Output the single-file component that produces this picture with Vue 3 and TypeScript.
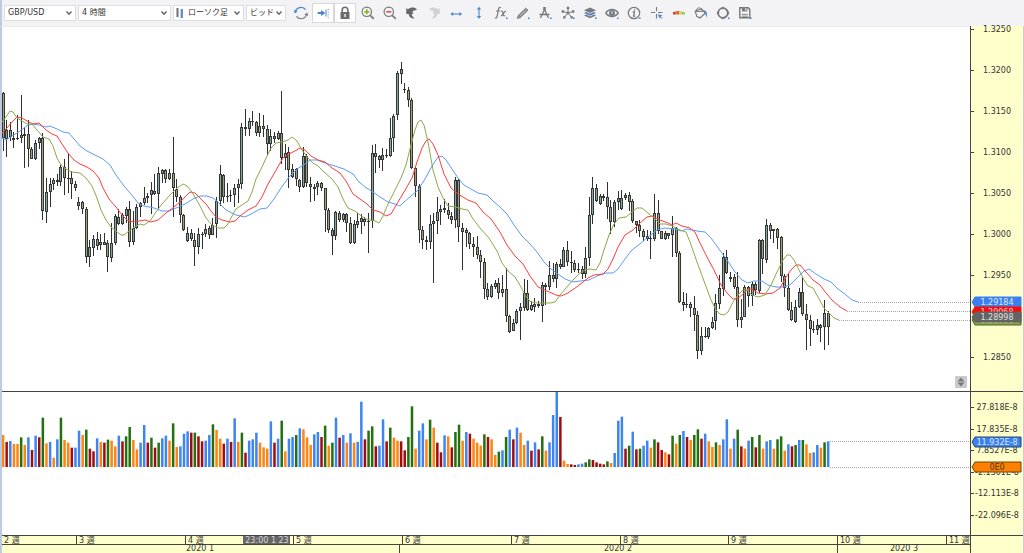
<script setup lang="ts">
interface Shape { d: string; s?: string; f?: string; w?: number }
interface Tool { label: string; shapes: Shape[]; menu?: boolean; on?: boolean; off?: boolean }
interface Candle { x: number; high: number; top: number; bottom: number; low: number; up: boolean }

const G = '#77787b'
const B = '#4a86cf'

const toolGroups: Tool[][] = [
  [
    { label: '更新', shapes: [
      { d: 'M2.3 7.2A5.8 5.8 0 0 1 12.6 4.6', s: B, w: 1.3 }, { d: 'M13.7 8.8A5.8 5.8 0 0 1 3.4 11.4', s: G, w: 1.1 },
      { d: 'M1 5L4.6 6.6L1.6 8.4Z', f: B }, { d: 'M15 11L11.4 9.4L14.4 7.6Z', f: G } ] },
    { label: '自動スクロール', on: true, shapes: [
      { d: 'M2.6 8H7', s: B, w: 2 }, { d: 'M6 5L10.4 8L6 11Z', f: B }, { d: 'M11 4.5V11.5', s: B, w: 1 },
      { d: 'M13.2 4V5M13.2 6.7V7.7M13.2 9.3V10.3M13.2 11.8V12.6', s: G, w: 1 } ] },
    { label: 'ロック', on: true, shapes: [
      { d: 'M3.5 7H12.5V14H3.5Z', f: '#6c6d70' }, { d: 'M5.2 7V5A2.8 2.8 0 0 1 10.8 5V7', s: '#6c6d70', w: 1.6 },
      { d: 'M8 9V12', s: '#fff', w: 1.3 } ] },
  ],
  [
    { label: '拡大', shapes: [
      { d: 'M11.5 6.8A4.7 4.7 0 1 1 2.1 6.8A4.7 4.7 0 1 1 11.5 6.8', s: G, w: 1.2 }, { d: 'M10.3 10.3L13.8 13.8', s: G, w: 1.7 },
      { d: 'M4.3 6.8H9.3M6.8 4.3V9.3', s: '#8db51c', w: 1.7 } ] },
    { label: '縮小', shapes: [
      { d: 'M11.5 6.8A4.7 4.7 0 1 1 2.1 6.8A4.7 4.7 0 1 1 11.5 6.8', s: G, w: 1.2 }, { d: 'M10.3 10.3L13.8 13.8', s: G, w: 1.7 },
      { d: 'M4.3 6.8H9.3', s: '#e05252', w: 1.7 } ] },
    { label: '元に戻す', shapes: [
      { d: 'M2.3 3L4 4.2C6.4 2 10.6 1.8 13 4.4L10.8 5.6C9 5.2 8.4 6.4 8.6 7.6L9.4 9H7.6C7.8 10.6 8.8 11.8 10.6 13.2C7.6 14 5 12.2 4.6 9H2.3Z', f: '#66676a' } ] },
    { label: 'やり直し', off: true, shapes: [
      { d: 'M13.7 3L12 4.2C9.6 2 5.4 1.8 3 4.4L5.2 5.6C7 5.2 7.6 6.4 7.4 7.6L6.6 9H8.4C8.2 10.6 7.2 11.8 5.4 13.2C8.4 14 11 12.2 11.4 9H13.7Z', f: '#d2d2d5' } ] },
    { label: '水平方向に合わせる', shapes: [
      { d: 'M4 9H13', s: B, w: 1.1 }, { d: 'M2.3 9L5.1 7V11ZM14.2 9L11.4 7V11Z', f: B } ] },
  ],
  [
    { label: '垂直方向に合わせる', shapes: [
      { d: 'M8 4V12', s: B, w: 1.1 }, { d: 'M8 1.8L5.8 4.6H10.2ZM8 13.8L5.8 11H10.2Z', f: B } ] },
    { label: 'インジケーター', menu: true, shapes: [
      { d: 'M7.8 2.8C6.2 1.8 5.6 3 5.3 4.8L4.2 10.8C3.9 12.8 3.2 13.4 1.8 12.8M3.2 6H7.2', s: G, w: 1.2 },
      { d: 'M8 6.3C9.8 5.6 9.8 7.6 10.2 9.2C10.5 11 11 11.4 12.2 10.6M13 6.2C11 6 9.8 10.8 7.8 11', s: G, w: 1.2 } ] },
    { label: '描画', menu: true, shapes: [
      { d: 'M2.3 13.5L3.2 10.4L10.8 3L13 5.2L5.4 12.6Z', f: '#8a8b8e', s: G, w: .8 },
      { d: 'M4.8 10.9L11.2 4.7', s: '#c9c9cc', w: .8 } ] },
    { label: '測定', menu: true, shapes: [
      { d: 'M7.5 4.5L3.5 13M7.5 4.5L11.5 13M2.5 9.5H12.5', s: G, w: 1.3 }, { d: 'M6.2 2H8.8V5.5H6.2Z', f: G } ] },
  ],
  [
    { label: '接続', menu: true, shapes: [
      { d: 'M8 8V3M8 8L2.8 6.5M8 8L13.2 6.5M8 8L4.3 12.3M8 8L11.7 12.3', s: G, w: 1 },
      { d: 'M6.8 1.8H9.2V4.2H6.8ZM3.1 11.2H5.5V13.6H3.1ZM10.5 11.2H12.9V13.6H10.5Z', f: G },
      { d: 'M1.7 5.3H4.1V7.7H1.7ZM11.9 5.3H14.3V7.7H11.9ZM6.8 6.8H9.2V9.2H6.8Z', f: G } ] },
    { label: 'レイヤー', menu: true, shapes: [
      { d: 'M2 10.5L8 13.3L14 10.5L12 9.6L8 11.4L4 9.6Z', f: '#77787b' },
      { d: 'M2 7.9L8 10.7L14 7.9L12 7L8 8.8L4 7Z', f: '#4f80bd' }, { d: 'M2 5.3L8 2.5L14 5.3L8 8.1Z', f: G } ] },
    { label: '表示', menu: true, shapes: [
      { d: 'M1.8 8C5 3.4 11 3.4 14.2 8C11 12.6 5 12.6 1.8 8Z', s: G, w: 1.4 },
      { d: 'M11 8A3 3 0 1 1 5 8A3 3 0 1 1 11 8', f: G }, { d: 'M9.4 7.6A1.4 1.4 0 1 1 6.6 7.6A1.4 1.4 0 1 1 9.4 7.6', f: '#8fb8e8' } ] },
    { label: '情報', menu: true, shapes: [
      { d: 'M13.7 8A5.7 5.7 0 1 1 2.3 8A5.7 5.7 0 1 1 13.7 8', s: G, w: 1.2 },
      { d: 'M8.6 4.2V5.4M6.7 7H8.4L7.6 11.2H9.2', s: G, w: 1.3 } ] },
  ],
  [
    { label: '十字カーソル', shapes: [
      { d: 'M7.5 2V6.2M7.5 9V13.5M2 7.5H6.2M9 7.5H13.5', s: G, w: 1.1 }, { d: 'M9 9L13.5 10.4L11.7 11.2L13.6 13.2L12.8 13.8L11.2 12L10.3 13.4Z', f: B } ] },
    { label: 'センチメント', shapes: [
      { d: 'M2 9.6V7.2L4.5 6.4V9.6Z', f: '#c33a2c' }, { d: 'M4.5 9.6V6.4L8 5.8V9.6Z', f: '#e0663c' },
      { d: 'M8 9.6V5.8L10.5 6.2V9.6Z', f: '#d5d06a' }, { d: 'M10.5 9.6V6.4L14 7.2V9.6Z', f: '#9acb3c' } ] },
    { label: '塗りつぶし', shapes: [
      { d: 'M2.2 6.2L8.4 3.6L12.4 8L7 13L3.8 11.4Z', s: G, w: 1.2 }, { d: 'M3 6.4C3.4 2 8 1.6 8.4 5.4', s: G, w: 1 },
      { d: 'M2.4 6.4H11', s: G, w: 1 }, { d: 'M10.6 5.6C13.4 5.4 14.4 8 13.8 12.6C12.8 11 12.8 9 11.6 8Z', f: B } ] },
    { label: '設定', menu: true, shapes: [
      { d: 'M12.8 8A4.8 4.8 0 1 1 3.2 8A4.8 4.8 0 1 1 12.8 8', s: G, w: 1.8 },
      { d: 'M6.7 2.4H9.3M6.7 13.6H9.3M2.4 6.7V9.3M13.6 6.7V9.3', s: G, w: 1 } ] },
    { label: '保存', menu: true, shapes: [
      { d: 'M2.8 2.8H11.2L12.8 4.4V12.8H2.8Z', s: G, w: 1.4 }, { d: 'M5 2.5H10.4V6.4H5Z', f: G }, { d: 'M8.2 3.3H9.4V5.6H8.2Z', f: '#f3f3f6' },
      { d: 'M4.8 9.4H10.8M4.8 11.2H10.8', s: G, w: .9 } ] },
  ],
]

const step = 3.619
const firstX = 3
const barX = (i: number) => firstX + i * step

/* high, body top, body bottom, low (thirds of a unit below origin), direction */
const sessions: { origin: number; rows: string }[] = [
  { origin: 80, rows: `35 38 175 212 d,120 150 178 230 u,125 149 170 182 d,155 175 180 205 u,105 174 176 180 d,44 166 174 190 u,140 163 169 265 u,120 163 206 262 d,200 206 236 238 d,180 188 237 240 u,
170 175 188 208 u,158 175 394 420 d,293 335 397 430 u,293 313 335 382 u,295 300 313 330 u,283 300 307 317 d,254 262 306 317 u,238 262 295 345 d,222 293 296 340 d,272 293 311 358 d,
303 312 324 334 d,350 367 377 390 u,363 366 386 402 d,380 386 532 550 d,480 502 532 560 u,465 477 503 528 u,455 476 497 510 d,463 487 496 510 u,458 486 494 496 d,480 490 532 577 d,
430 488 533 545 u,403 409 489 496 u,386 411 431 434 d,400 406 431 434 u,380 386 408 430 u,362 388 486 500 d,393 443 486 494 u,373 382 443 446 u,365 370 382 410 u,320 355 370 375 u,
338 347 355 370 u,305 331 345 402 u,282 332 343 345 d,260 280 343 387 u,268 271 281 310 u,266 271 297 308 d,266 280 297 300 u,172 280 325 412 d,297 326 351 365 d,346 352 406 428 d,
402 405 449 454 d,442 460 484 487 u,448 460 478 483 d,460 480 502 558 d,443 462 502 522 u,456 461 463 506 u,433 446 463 472 u,438 445 465 476 d,413 434 464 466 u,352 364 433 474 u,
256 283 364 378 u,283 284 352 368 d,310 348 352 367 d,330 345 348 367 u,312 323 346 381 u,296 313 323 370 u,130 142 312 327 u,88 142 148 168 u,115 124 148 168 u,92 123 126 138 d,
122 126 160 168 d,100 139 160 170 u,104 139 148 172 d,135 148 193 226 d,148 169 193 213 u,157 169 178 188 d,152 160 178 180 u,34 160 233 252 d,193 218 233 270 u,200 216 271 324 d,
252 268 290 293 u,265 268 298 318 d,297 299 320 336 d,202 229 320 323 u,222 227 310 320 d,290 311 320 367 d,313 320 326 362 d,302 308 321 346 u,305 308 325 333 d,323 325 391 456 d,
385 390 451 458 d,443 451 467 524 d,393 397 467 480 u,394 398 421 425 d,400 403 421 427 u,398 401 430 455 d,412 430 490 491 d,420 433 490 491 u,400 424 434 445 u,402 415 425 463 u,
412 416 426 438 d,400 423 426 520 d,195 220 424 445 u,193 220 230 278 d,225 229 240 265 d,203 226 241 272 u,208 225 227 235 u,114 173 227 230 u,103 107 173 217 u` },
  { origin: 50, rows: `63 70 196 211 u,37 57 71 102 u,100 117 120 130 d,112 119 151 170 d,145 151 353 356 d,350 353 407 440 d,403 407 541 580 d,528 541 571 596 d,558 571 577 600 d,495 521 577 596 u,490 514 521 700 u,
440 485 514 553 u,465 477 485 524 u,448 475 479 488 d,458 479 496 508 d,486 497 511 522 d,380 391 511 533 u,386 391 532 575 d,520 533 545 661 d,534 541 550 590 d,546 549 583 598 d,
562 583 592 620 d,557 592 616 628 d,600 616 637 684 d,625 637 716 746 d,700 716 740 750 d,703 709 741 743 u,690 699 711 717 u,683 699 728 748 d,674 718 728 740 u,655 718 799 815 d,
795 799 846 848 d,806 818 842 844 u,778 783 818 822 u,760 772 784 870 u,686 729 775 783 u,690 729 779 784 d,752 766 779 783 u,745 762 770 785 u,752 762 768 775 d,695 706 767 816 u,
699 706 710 764 d,632 676 710 720 u,640 676 686 695 d,635 641 688 714 u,628 641 650 658 d,592 601 650 652 u,573 601 637 648 d,603 635 638 668 d,630 638 661 667 d,640 656 660 670 d,648 656 673 687 d` },
  { origin: 160, rows: `262 295 343 355 u,112 166 293 318 u,50 85 166 191 u,72 85 122 126 d,102 109 131 135 u,102 109 113 124 d,65 110 140 176 d,120 140 187 221 d,120 125 186 200 u,94 113 125 150 u,90 115 146 150 u,
98 105 115 120 u,97 106 127 152 d,116 124 184 188 d,182 184 195 220 d,180 194 213 232 d,208 213 231 244 d,210 229 237 244 d,212 234 237 297 d,102 160 237 243 u,120 160 214 222 d,
212 214 236 238 d,212 220 236 239 u,218 220 227 236 d,168 204 226 290 u,200 204 280 292 d,274 280 427 430 d,396 427 434 452 d,398 432 436 445 d,426 433 445 470 d,408 445 466 512 d,
453 466 574 598 d,500 527 574 584 u,500 527 530 533 d,500 503 531 537 u,470 485 503 508 u,403 430 484 510 u,344 385 433 448 u,280 290 386 407 u,270 290 340 342 d,336 352 358 367 u,
343 352 380 387 d,337 380 479 502 d,418 472 479 503 u,376 380 470 472 u,378 381 409 440 d,366 373 409 437 u,366 372 391 404 d,236 239 392 400 u,236 239 298 342 d,178 196 301 308 u,
190 196 214 237 d,206 208 214 248 d,204 206 233 268 d` },
  { origin: 200, rows: `108 112 228 245 d,222 228 265 290 d,222 264 331 334 d,307 331 361 363 d,300 322 367 370 u,264 277 321 323 u,232 277 343 347 d,313 343 361 450 d,345 361 388 438 d,363 386 390 398 d,358 376 389 406 u,373 376 384 426 d,300 340 382 450 u,334 340 382 434 d` },
]

const candles: Candle[] = sessions
  .flatMap(({ origin, rows }) => rows.split(',').map((row) => {
    const cells = row.trim().split(' ')
    const [high, top, bottom, low] = cells.slice(0, 4).map((v) => Math.round(origin + Number(v) / 3))
    return { high, top, bottom, low, up: cells[4] === 'u' }
  }))
  .map((c, i) => ({ ...c, x: Math.round(barX(i) - 0.5) }))

/* colour key and bar top (thirds of a unit below 385) */
const volumeRows = `O150 R171 B168 O177 O177 G157 O180 B157 R195 B152 R157 G98 O175 B171 O218 B163 G98 O165 O173 R188
B188 B137 O150 G134 R191 R199 B160 O171 R173 G164 O167 O184 B152 R169 G154 G126 O165 O193 B173 B120
R173 G158 R188 G173 B160 B152 O167 G115 O186 B184 B146 B139 R143 G143 R154 R169 B167 B150 G118 O135
O161 R176 B161 R171 B100 O171 G143 R203 B167 B163 B143 O173 O187 O191 B109 R173 B161 G107 O199 B161
B156 G150 B130 O133 O157 O180 B148 B141 R156 G122 O182 G173 B98 R158 B150 O173 B145 O173 B171 B50
R163 G137 G124 R184 B182 B103 R169 G128 O158 O167 R169 R196 G156 G64 O191 B137 B115 O163 G104 O128
R173 R202 B151 O154 R187 G141 G119 O167 B141 R146 O161 O173 O182 G148 R156 O163 O210 G200 B196 G156
B134 R163 B128 O143 O180 B167 R197 B172 R193 G154 O197 B172 B90 B20 R96 O227 O237 R238 R240 B238
B236 G232 G223 R225 R232 R236 R238 G229 O234 B204 B107 B95 R191 G182 B140 R193 G191 B182 B167 O188
G163 R172 R195 O202 R208 G152 O176 G150 B138 R156 O165 G150 G133 R161 B146 O169 O186 G172 O180 B163
B103 O191 B161 G134 R184 O191 B167 G156 R187 G150 O191 B169 B165 O191 G163 G154 O197 B178 R184 G180
B165 G165 O178 O204 B202 B180 O188 G172 B169`
const volumeColors: Record<string, string> = { O: '#ff8410', R: '#a00c10', G: '#23700f', B: '#3d85f0' }
const volumes = volumeRows.split(/\s+/).map((v, i) => ({
  x: barX(i) - 1.2, y: 385 + Number(v.slice(1)) / 3, fill: volumeColors[v[0]],
}))

const averages = [
  { color: '#5b9bf5', points: '2,138 6,140 12,136 20,131 28,125 33,124 39,125 46,127 50,126 57,129 63,132 69,133 74,139 80,146 87,151 95,155 103,159 110,165 116,175 124,186 131,194 138,203 144,206 154,208 162,211 169,211 176,208 185,204 193,199 200,196 207,196 213,198 220,204 226,210 236,215 245,217 253,213 260,209 267,208 274,199 281,188 289,177 297,169 305,164 310,160 317,160 325,163 335,166 344,169 353,174 359,182 365,187 373,192 380,197 388,202 395,204 400,206 404,202 411,196 418,190 425,179 432,166 438,157 442,156 446,160 452,169 458,178 464,185 471,189 478,193 487,195 493,201 500,207 507,214 514,225 522,236 530,244 537,252 544,262 551,269 558,274 565,279 573,282 580,281 589,280 597,276 606,273 613,273 618,269 625,259 632,250 641,243 648,237 657,230 665,228 675,229 681,231 687,229 697,231 705,232 711,238 719,249 727,260 735,272 742,280 748,283 754,281 762,281 768,285 776,287 784,287 790,285 797,278 804,271 809,269 816,274 824,279 831,282 838,289 846,295 852,300 858,302' },
  { color: '#ff3a3a', points: '2,133 6,129 12,122 17,117 22,118 27,121 33,124 39,123 46,130 52,134 57,136 62,144 68,153 74,160 80,164 87,167 93,171 99,178 103,188 109,199 116,207 122,215 127,220 133,222 139,221 145,220 151,222 158,220 166,213 174,207 180,202 185,197 190,192 195,193 200,198 206,204 211,211 216,217 222,220 230,222 235,221 240,216 248,210 256,206 262,197 268,184 275,172 283,158 289,154 295,151 300,148 305,150 311,156 318,160 325,162 332,168 340,173 346,181 353,194 360,199 367,204 373,210 380,212 386,216 391,214 398,202 404,192 412,178 417,162 422,148 426,141 429,139 433,144 438,155 444,174 451,188 458,194 468,200 476,203 483,212 491,219 500,232 507,245 515,256 523,264 530,276 538,287 547,291 556,295 561,296 568,293 578,286 588,278 594,275 603,274 608,269 613,259 618,247 625,235 633,230 640,223 647,217 652,216 660,220 668,223 672,225 676,223 682,226 690,228 695,232 700,243 707,257 714,270 721,285 728,294 733,299 737,299 743,294 748,289 752,289 758,293 766,294 773,293 780,288 786,277 791,270 796,265 800,265 806,272 813,280 820,285 826,293 832,300 840,307 847,311' },
  { color: '#8aa84a', points: '2,122 6,117 10,111 13,112 17,118 22,121 27,124 32,124 37,130 43,137 49,139 53,146 57,158 61,165 66,169 72,172 80,173 86,178 92,186 97,198 101,210 106,220 111,227 116,231 121,235 124,235 129,231 136,226 140,224 144,225 150,221 156,212 162,204 170,195 177,188 183,184 187,186 192,192 199,204 206,218 212,225 218,228 224,228 228,224 232,216 236,209 242,205 248,201 252,192 256,179 262,167 267,156 271,148 276,143 282,142 288,140 292,137 297,141 302,150 308,158 313,163 318,166 324,172 332,179 338,187 343,199 348,208 355,211 360,215 366,219 375,221 379,223 383,216 388,204 394,192 401,178 406,165 411,145 415,130 418,122 421,120 424,125 428,142 433,170 438,187 443,198 448,206 456,207 462,209 468,210 473,219 480,228 489,238 497,251 502,263 508,271 515,277 521,287 526,297 531,302 538,303 550,303 555,302 560,295 567,287 573,280 580,273 585,270 590,269 596,270 600,263 604,250 609,235 614,224 619,218 626,217 632,212 637,208 642,208 648,213 654,218 660,224 666,224 672,226 680,230 686,232 690,242 697,262 704,281 711,300 716,310 720,314 724,315 728,312 733,302 738,295 743,290 747,290 752,295 758,297 765,295 771,285 777,272 783,260 787,255 790,255 794,260 799,270 804,280 808,286 813,288 818,297 824,308 829,313 834,318 839,320' },
]

const priceTicks = ['1.3250', '1.3200', '1.3150', '1.3100', '1.3050', '1.3000', '1.2950', '', '1.2850']
  .map((text, i) => ({ text, y: Math.round(29 + i * 41.06) }))
  .filter((t) => t.text)
const volumeTicks = ['27.818E-8', '17.835E-8', '7.8527E-8', '-2.1301E-8', '-12.113E-8', '-22.096E-8']
  .map((text, i) => ({ text, y: Math.round(407 + i * 21.5) }))
const weeks = ['2 週', '3 週', '4 週', '5 週', '6 週', '7 週', '8 週', '9 週', '10 週', '11 週']
  .map((text, i) => ({ text, x: i === 0 ? 1 : Math.round(76 + (i - 1) * 108.7) }))
const months = [{ text: '2020 1', x: 200 }, { text: '2020 2', x: 618 }, { text: '2020 3', x: 904 }]
const guides = [[858, 302], [847, 311], [839, 320], [830, 441], [830, 467]]
const tags = [
  { text: '1.29184', y: 302, fill: '#3a80f0', edge: '#3a80f0', ink: '#dfe8f8' },
  { text: '1.29068', y: 312, fill: '#fb0a0a', edge: '#fb0a0a', ink: '#ffd0d0' },
  { text: '1.28960', y: 320, fill: '#8aa84a', edge: '#4f6128', ink: '#e8e8d0' },
  { text: '1.28998', y: 317, fill: '#636363', edge: '#636363', ink: '#e0e0e0' },
  { text: '11.932E-8', y: 442, fill: '#3a80f0', edge: '#27466f', ink: '#dfe8f8' },
  { text: '0E0', y: 467, fill: '#ff7f00', edge: '#6b4410', ink: '#4a3a20' },
]
const tagPath = (y: number) => `M972 ${y}L975 ${y - 5}H1021V${y + 5}H975Z`
</script>

<template>
  <div class="app">
    <header class="toolbar">
      <div class="picks">
        <label class="pick symbol">
          <select aria-label="通貨ペア"><option>GBP/USD</option></select>
          <svg class="chevron" viewBox="0 0 8 6"><path d="M1.5 1.5L4 4.2L6.5 1.5" /></svg>
        </label>
        <label class="pick period">
          <select aria-label="時間足"><option>4 時間</option></select>
          <svg class="chevron" viewBox="0 0 8 6"><path d="M1.5 1.5L4 4.2L6.5 1.5" /></svg>
        </label>
        <label class="pick style">
          <svg class="style-icon" viewBox="0 0 8 10">
            <path d="M1.5 0V9" stroke="#6d6e72" stroke-width="2" /><path d="M5.8 1V10" stroke="#6390cc" stroke-width="2.4" />
          </svg>
          <select aria-label="チャートの種類"><option>ローソク足</option></select>
          <svg class="chevron" viewBox="0 0 8 6"><path d="M1.5 1.5L4 4.2L6.5 1.5" /></svg>
        </label>
        <label class="pick side">
          <select aria-label="価格の種類"><option>ビッド</option></select>
          <svg class="chevron" viewBox="0 0 8 6"><path d="M1.5 1.5L4 4.2L6.5 1.5" /></svg>
        </label>
      </div>
      <div class="tools">
        <div v-for="(group, g) in toolGroups" :key="g" class="group">
          <button v-for="tool in group" :key="tool.label" type="button" :class="{ on: tool.on }" :disabled="tool.off" :aria-label="tool.label">
            <svg viewBox="0 0 16 16">
              <path v-for="(p, i) in tool.shapes" :key="i" :d="p.d" :fill="p.f ?? 'none'" :stroke="p.s ?? 'none'" :stroke-width="p.w ?? 0" />
              <path v-if="tool.menu" d="M13 12.5H14.6V14.1H13Z" :fill="B" />
            </svg>
          </button>
        </div>
      </div>
    </header>

    <main>
      <svg class="chart" viewBox="0 27 1024 526" role="img" aria-label="GBP/USD">
        <defs>
          <clipPath id="plot"><rect x="2" y="27" width="968" height="508" /></clipPath>
        </defs>
        <rect x="0" y="27" width="2" height="526" fill="#bccbe2" />
        <rect x="971" y="26" width="52" height="527" fill="#ffffcc" />
        <rect x="2" y="536" width="969" height="17" fill="#ffffcc" />
        <rect x="1023" y="26" width="1" height="527" fill="#c3cfe0" />

        <g clip-path="url(#plot)">
          <rect v-for="(v, i) in volumes" :key="i" :x="v.x" :y="v.y" width="2.5" :height="467 - v.y" :fill="v.fill" />
          <g v-for="(c, i) in candles" :key="i" shape-rendering="crispEdges">
            <rect :x="c.x" :y="c.high" width="1" :height="c.low - c.high" fill="#303030" />
            <rect :x="c.x - 1" :y="c.top" width="3" :height="Math.max(1, c.bottom - c.top)" fill="#333836" />
            <rect v-if="c.bottom - c.top > 2" :x="c.x" :y="c.top + 1" width="1" :height="c.bottom - c.top - 2" :fill="c.up ? '#86a5a5' : '#a0a078'" />
          </g>
          <polyline v-for="a in averages" :key="a.color" :points="a.points" fill="none" :stroke="a.color" stroke-width="1" />
          <path v-for="([x, y], i) in guides" :key="i" :d="`M${x} ${y + 0.5}H970`" stroke="#a8a8a8" stroke-dasharray="1 1" />
        </g>

        <g class="rules">
          <path d="M2 391.5H1023M2 535.5H1023M2 544.5H970M970.5 26V553M399.5 544V553M837.5 544V553" />
          <path v-for="w in weeks.slice(1)" :key="w.text" :d="`M${w.x + 0.5} 535V544`" />
          <path v-for="t in [...priceTicks, ...volumeTicks]" :key="t.text" :d="`M970 ${t.y + 0.5}H974`" />
        </g>

        <g class="labels">
          <text v-for="t in priceTicks" :key="t.text" x="983" :y="t.y + 3">{{ t.text }}</text>
          <text v-for="t in volumeTicks" :key="t.text" x="997" :y="t.y + 3" text-anchor="middle">{{ t.text }}</text>
          <text v-for="w in weeks" :key="w.text" :x="w.x + 3" y="543">{{ w.text }}</text>
          <text v-for="m in months" :key="m.text" :x="m.x" y="551" text-anchor="middle">{{ m.text }}</text>
          <rect x="243" y="536" width="47" height="8" fill="#666" />
          <text x="267" y="543" text-anchor="middle" class="marker">23:00 1 23</text>
          <g v-for="t in tags" :key="t.text">
            <path :d="tagPath(t.y)" :fill="t.fill" :stroke="t.edge" />
            <text x="997" :y="t.y + 3" text-anchor="middle" :style="{ fill: t.ink }">{{ t.text }}</text>
          </g>
        </g>

        <g>
          <rect x="955" y="376" width="12" height="12" rx="1" fill="#cbcbcb" />
          <path d="M961 377.5L964.5 381.5H957.5ZM961 386.5L964.5 382.5H957.5Z" fill="#77787a" />
        </g>
      </svg>
    </main>
  </div>
</template>

<style>
body { margin: 0; background: #fff; }
</style>

<style scoped>
.app { font-family: "DejaVu Sans", "Noto Sans CJK JP", sans-serif; font-size: 8px; color: #333; }
.toolbar {
  display: flex; align-items: center; gap: 4px; height: 27px; box-sizing: border-box;
  border-left: 2px solid #bccbe2; border-bottom: 1px solid #ededf0; padding-left: 2px; background: #f3f3f6;
}
.picks { display: flex; gap: 2px; }
.pick {
  display: flex; align-items: center; gap: 2px; box-sizing: border-box; height: 16px;
  padding: 0 2px 0 3px; border: 1px solid #dedee1; background: #fff;
}
.symbol { width: 72px; }
.period { width: 93px; }
.style { width: 71px; padding-left: 2px; }
.side { width: 40px; gap: 0; }
.pick select {
  flex: 1; min-width: 0; padding: 0; border: 0; outline: 0; appearance: none; background: none;
  color: #333; font: inherit; line-height: 14px; height: 14px;
}
.style select { padding-left: 2px; }
.chevron { flex: none; width: 8px; height: 6px; fill: none; stroke: #666; stroke-width: 1.5; }
.side .chevron { margin-left: 2px; }
.style-icon { flex: none; width: 8px; height: 10px; }
.tools { display: flex; gap: 1px; }
.group { display: flex; }
.group button {
  display: grid; place-items: center; box-sizing: border-box; width: 22px; height: 20px;
  padding: 0; border: 1px solid transparent; background: none;
}
.group button.on { border-color: #d9d9dc; background: #fff; }
.group svg { width: 16px; height: 16px; }
.chart { display: block; width: 100%; height: auto; overflow: visible; }
.rules path { stroke: #444; fill: none; }
.labels text { font-size: 8px; fill: #333; }
.labels text.marker { fill: #d8d8d8; }
</style>
